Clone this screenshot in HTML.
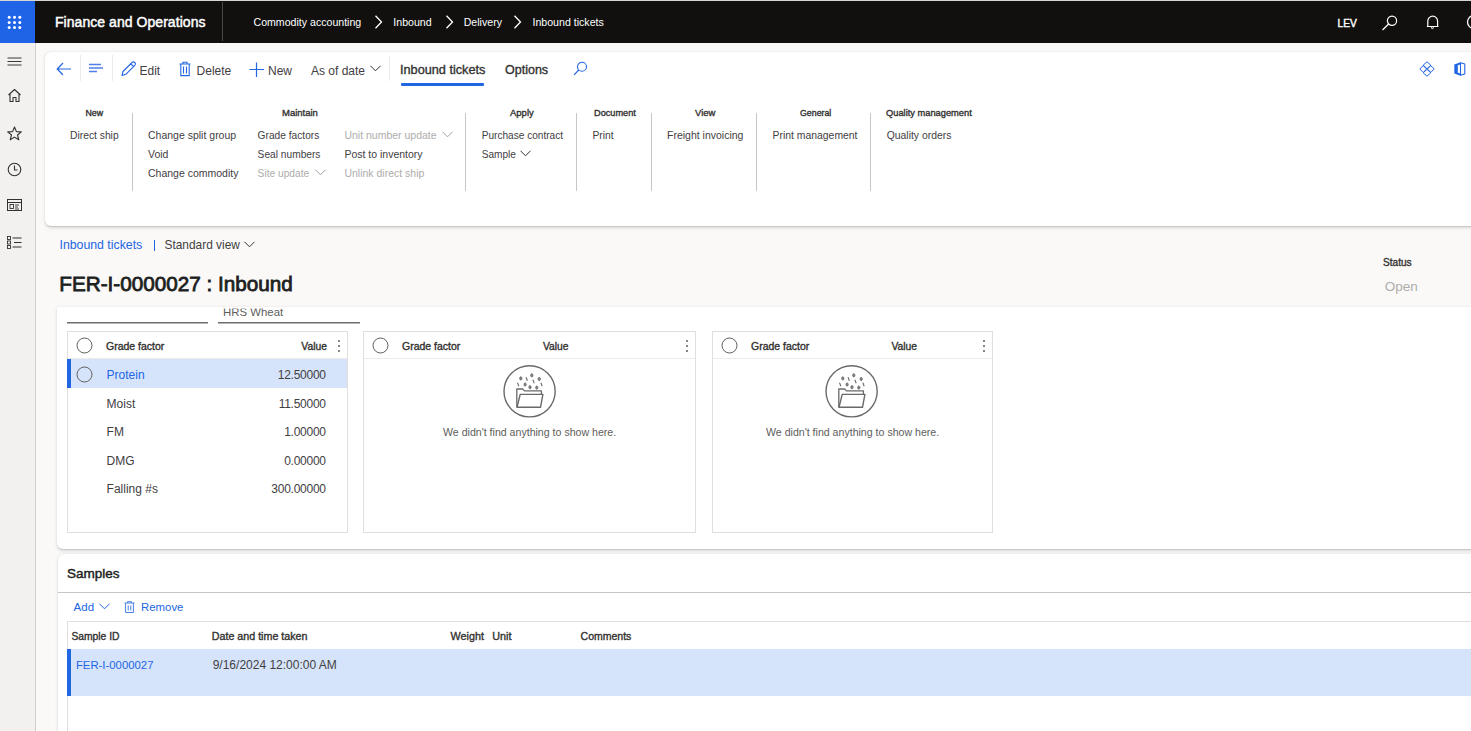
<!DOCTYPE html>
<html><head><meta charset="utf-8"><title>Inbound tickets</title>
<style>
html,body{margin:0;padding:0;width:1471px;height:731px;overflow:hidden;background:#faf9f8}
body{position:relative;font-family:"Liberation Sans", sans-serif}
.t{position:absolute;line-height:1;white-space:nowrap}
svg{overflow:visible}
</style></head><body>
<div style="position:absolute;left:0px;top:0px;width:1471px;height:731px;background:#faf9f8"></div>
<div style="position:absolute;left:0px;top:43px;width:35px;height:688px;background:#f2f1f0;border-right:1px solid #d2d0ce"></div>
<div style="position:absolute;left:0px;top:0px;width:1471px;height:43px;background:#11100f"></div>
<div style="position:absolute;left:0px;top:1px;width:35px;height:42px;background:#1f64e6"></div>
<div style="position:absolute;left:0px;top:0px;width:1471px;height:1px;background:#d8d6d4"></div>
<svg style="position:absolute;left:0px;top:0px" width="36" height="42" viewBox="0 0 36 42" fill="none"><circle cx="9.2" cy="17.2" r="1.5" fill="#fff"/><circle cx="9.2" cy="22.4" r="1.5" fill="#fff"/><circle cx="9.2" cy="27.6" r="1.5" fill="#fff"/><circle cx="14.5" cy="17.2" r="1.5" fill="#fff"/><circle cx="14.5" cy="22.4" r="1.5" fill="#fff"/><circle cx="14.5" cy="27.6" r="1.5" fill="#fff"/><circle cx="19.8" cy="17.2" r="1.5" fill="#fff"/><circle cx="19.8" cy="22.4" r="1.5" fill="#fff"/><circle cx="19.8" cy="27.6" r="1.5" fill="#fff"/></svg>
<div class="t" style="left:55.0px;top:15.2px;font-size:14px;color:#ffffff;font-weight:400;letter-spacing:0.05px;-webkit-text-stroke:0.45px #fff">Finance and Operations</div>
<div style="position:absolute;left:222px;top:2px;width:1px;height:39px;background:#4a4846"></div>
<div class="t" style="left:253.5px;top:17.4px;font-size:10.6px;color:#ffffff;font-weight:400;">Commodity accounting</div>
<div class="t" style="left:393.3px;top:17.4px;font-size:10.6px;color:#ffffff;font-weight:400;">Inbound</div>
<div class="t" style="left:463.7px;top:17.4px;font-size:10.6px;color:#ffffff;font-weight:400;">Delivery</div>
<div class="t" style="left:532.5px;top:17.4px;font-size:10.6px;color:#ffffff;font-weight:400;">Inbound tickets</div>
<svg style="position:absolute;left:374px;top:15px" width="9" height="14" viewBox="0 0 9 14" fill="none"><path d="M1.5 0.8 L7.5 7 L1.5 13.2" stroke="#fff" stroke-width="1.3"/></svg>
<svg style="position:absolute;left:445px;top:15px" width="9" height="14" viewBox="0 0 9 14" fill="none"><path d="M1.5 0.8 L7.5 7 L1.5 13.2" stroke="#fff" stroke-width="1.3"/></svg>
<svg style="position:absolute;left:513px;top:15px" width="9" height="14" viewBox="0 0 9 14" fill="none"><path d="M1.5 0.8 L7.5 7 L1.5 13.2" stroke="#fff" stroke-width="1.3"/></svg>
<div class="t" style="left:1337.6px;top:18.7px;font-size:10.2px;color:#ffffff;font-weight:400;-webkit-text-stroke:0.4px #fff">LEV</div>
<svg style="position:absolute;left:1381px;top:15px" width="17" height="16" viewBox="0 0 17 16" fill="none"><circle cx="11" cy="5.7" r="4.6" stroke="#fff" stroke-width="1.2"/><path d="M7.6 9 L1.5 15" stroke="#fff" stroke-width="1.3"/></svg>
<svg style="position:absolute;left:1425px;top:15px" width="15" height="16" viewBox="0 0 15 16" fill="none"><path d="M2.8 11.4 V6.1 A4.9 4.9 0 0 1 12.6 6.1 V11.4 M1.9 11.5 H13.5" stroke="#fff" stroke-width="1.2"/><circle cx="7.4" cy="12.7" r="1" stroke="#fff" stroke-width="0.9"/></svg>
<svg style="position:absolute;left:1464px;top:14px" width="7" height="16" viewBox="0 0 7 16" fill="none"><circle cx="10" cy="8" r="6.5" stroke="#fff" stroke-width="1.3"/></svg>
<svg style="position:absolute;left:7px;top:56px" width="15" height="11" viewBox="0 0 15 11" fill="none"><path d="M0.5 2h14M0.5 5.5h14M0.5 9h14" stroke="#3b3a39" stroke-width="1.1"/></svg>
<svg style="position:absolute;left:7px;top:88px" width="15" height="15" viewBox="0 0 15 15" fill="none"><path d="M1.5 7 L7.5 1.5 L13.5 7 M3 5.8 V13.5 H6 V9.5 H9 V13.5 H12 V5.8" stroke="#323130" stroke-width="1.1" stroke-linejoin="round"/></svg>
<svg style="position:absolute;left:7px;top:126px" width="15" height="15" viewBox="0 0 15 15" fill="none"><path d="M7.5 1 L9.4 5.6 L14.3 5.9 L10.5 9 L11.8 13.8 L7.5 11.1 L3.2 13.8 L4.5 9 L0.7 5.9 L5.6 5.6 Z" stroke="#323130" stroke-width="1.1" stroke-linejoin="round"/></svg>
<svg style="position:absolute;left:7px;top:162px" width="15" height="15" viewBox="0 0 15 15" fill="none"><circle cx="7.5" cy="7.5" r="6.3" stroke="#323130" stroke-width="1.1"/><path d="M7.5 3.5 V8 H10.5" stroke="#323130" stroke-width="1.1"/></svg>
<svg style="position:absolute;left:7px;top:199px" width="15" height="13" viewBox="0 0 15 13" fill="none"><rect x="0.5" y="0.5" width="14" height="11" stroke="#323130" stroke-width="1"/><path d="M0.5 3.5 H14.5" stroke="#323130"/><rect x="3" y="5.5" width="3.5" height="4" stroke="#323130" stroke-width="0.9"/><path d="M8 6 H12 M8 8 H11 M8 10 H12" stroke="#323130" stroke-width="0.9"/></svg>
<svg style="position:absolute;left:7px;top:236px" width="15" height="13" viewBox="0 0 15 13" fill="none"><rect x="0.5" y="0.5" width="3" height="3" stroke="#323130" stroke-width="0.9"/><rect x="0.5" y="5" width="3" height="3" stroke="#323130" stroke-width="0.9"/><rect x="0.5" y="9.5" width="3" height="3" stroke="#323130" stroke-width="0.9"/><path d="M5.5 2H14.5M7 6.5H14.5M5.5 11H14.5" stroke="#323130" stroke-width="1"/></svg>
<div style="position:absolute;left:45px;top:52px;width:1440px;height:174px;background:#fff;border-radius:6px;box-shadow:0 1.6px 3.6px rgba(0,0,0,0.13),0 0.3px 0.9px rgba(0,0,0,0.11)"></div>
<svg style="position:absolute;left:56px;top:62px" width="16" height="14" viewBox="0 0 16 14" fill="none"><path d="M7 1 L1.2 7 L7 13 M1.2 7 H15" stroke="#2266e3" stroke-width="1.2"/></svg>
<div style="position:absolute;left:80px;top:55px;width:1px;height:26px;background:#edebe9"></div>
<svg style="position:absolute;left:88px;top:63px" width="16" height="10" viewBox="0 0 16 10" fill="none"><path d="M1 1.5H13M1 5H15M1 8.5H9" stroke="#4f7fe8" stroke-width="1.3"/></svg>
<div style="position:absolute;left:112px;top:55px;width:1px;height:26px;background:#edebe9"></div>
<svg style="position:absolute;left:120px;top:61px" width="17" height="16" viewBox="0 0 17 16" fill="none"><path d="M2 14.5 L3 10.5 L12 1.5 A1.6 1.6 0 0 1 14.8 4.3 L5.8 13.3 Z M10.8 2.8 L13.5 5.5" stroke="#2266e3" stroke-width="1.1" stroke-linejoin="round"/></svg>
<div class="t" style="left:139.5px;top:64.6px;font-size:12px;color:#42403f;font-weight:400;">Edit</div>
<svg style="position:absolute;left:179px;top:61px" width="12" height="16" viewBox="0 0 12 16" fill="none"><path d="M0.5 3H11.5 M4 3V1.2H8V3 M1.8 3V14.6H10.2V3 M4.5 5.5V12.5 M7.5 5.5V12.5" stroke="#2266e3" stroke-width="1.1"/></svg>
<div class="t" style="left:196.6px;top:64.6px;font-size:12px;color:#42403f;font-weight:400;">Delete</div>
<svg style="position:absolute;left:249px;top:62px" width="16" height="16" viewBox="0 0 16 16" fill="none"><path d="M7.5 0.5V15M0.5 7.5H15" stroke="#2266e3" stroke-width="1.2"/></svg>
<div class="t" style="left:268.0px;top:64.6px;font-size:12px;color:#42403f;font-weight:400;">New</div>
<div class="t" style="left:311.0px;top:64.6px;font-size:12px;color:#42403f;font-weight:400;">As of date</div>
<svg style="position:absolute;left:370px;top:65px" width="11" height="7" viewBox="0 0 11 7" fill="none"><path d="M0.5 0.8 L5.5 5.8 L10.5 0.8" stroke="#323130" stroke-width="1"/></svg>
<div style="position:absolute;left:389px;top:56px;width:1px;height:25px;background:#edebe9"></div>
<div class="t" style="left:400.0px;top:63.8px;font-size:12.7px;color:#323130;font-weight:400;-webkit-text-stroke:0.35px currentColor">Inbound tickets</div>
<div style="position:absolute;left:401px;top:83px;width:83px;height:3px;background:#2266e3;border-radius:1px"></div>
<div class="t" style="left:505.0px;top:64.2px;font-size:12.5px;color:#323130;font-weight:400;-webkit-text-stroke:0.35px currentColor">Options</div>
<svg style="position:absolute;left:573px;top:61px" width="15" height="15" viewBox="0 0 15 15" fill="none"><circle cx="9" cy="5.8" r="4.5" stroke="#2266e3" stroke-width="1.1"/><path d="M5.8 9 L1 13.8" stroke="#2266e3" stroke-width="1.2"/></svg>
<svg style="position:absolute;left:1419px;top:61px" width="16" height="16" viewBox="0 0 16 16" fill="none"><path d="M4.2 4.2 L8 0.8 L11.8 4.2 L8 7.6 Z M0.8 8 L4.2 4.6 L7.6 8 L4.2 11.4 Z M8.4 8 L11.8 4.6 L15.2 8 L11.8 11.4 Z M4.2 11.8 L8 8.4 L11.8 11.8 L8 15.2 Z" stroke="#2266e3" stroke-width="1" stroke-linejoin="round"/></svg>
<svg style="position:absolute;left:1454px;top:62px" width="12" height="14" viewBox="0 0 12 14" fill="none"><path d="M0.3 2.6 L6.5 0.3 L7 0.5 V2.2 L3.8 3.2 V10.8 L7 11.8 V13.5 L6.5 13.7 L0.3 11.4 Z" fill="#2266e3"/><path d="M6.5 0.8 L10.8 2 V12 L6.5 13.2 Z" stroke="#2266e3" stroke-width="1.1" stroke-linejoin="round"/></svg>
<div class="t" style="left:85.5px;top:108.9px;font-size:8.8px;color:#323130;font-weight:400;-webkit-text-stroke:0.35px currentColor">New</div>
<div class="t" style="left:282.0px;top:108.3px;font-size:9.5px;color:#323130;font-weight:400;-webkit-text-stroke:0.35px currentColor">Maintain</div>
<div class="t" style="left:510.0px;top:108.3px;font-size:9.5px;color:#323130;font-weight:400;-webkit-text-stroke:0.35px currentColor">Apply</div>
<div class="t" style="left:594.0px;top:108.5px;font-size:9.2px;color:#323130;font-weight:400;-webkit-text-stroke:0.35px currentColor">Document</div>
<div class="t" style="left:695.0px;top:108.3px;font-size:9.5px;color:#323130;font-weight:400;-webkit-text-stroke:0.35px currentColor">View</div>
<div class="t" style="left:800.0px;top:108.9px;font-size:8.8px;color:#323130;font-weight:400;-webkit-text-stroke:0.35px currentColor">General</div>
<div class="t" style="left:886.0px;top:108.8px;font-size:9.3px;color:#323130;font-weight:400;-webkit-text-stroke:0.35px currentColor">Quality management</div>
<div style="position:absolute;left:132px;top:113px;width:1px;height:78px;background:#c8c6c4"></div>
<div style="position:absolute;left:465px;top:113px;width:1px;height:78px;background:#c8c6c4"></div>
<div style="position:absolute;left:576px;top:113px;width:1px;height:78px;background:#c8c6c4"></div>
<div style="position:absolute;left:651px;top:113px;width:1px;height:78px;background:#c8c6c4"></div>
<div style="position:absolute;left:756px;top:113px;width:1px;height:78px;background:#c8c6c4"></div>
<div style="position:absolute;left:870px;top:113px;width:1px;height:78px;background:#c8c6c4"></div>
<div class="t" style="left:70.0px;top:130.6px;font-size:10.3px;color:#42403f;font-weight:400;">Direct ship</div>
<div class="t" style="left:148.0px;top:130.4px;font-size:10.5px;color:#42403f;font-weight:400;">Change split group</div>
<div class="t" style="left:148.0px;top:149.4px;font-size:10.5px;color:#42403f;font-weight:400;">Void</div>
<div class="t" style="left:148.0px;top:168.4px;font-size:10.5px;color:#42403f;font-weight:400;">Change commodity</div>
<div class="t" style="left:257.6px;top:130.7px;font-size:10.2px;color:#42403f;font-weight:400;">Grade factors</div>
<div class="t" style="left:257.6px;top:149.7px;font-size:10.2px;color:#42403f;font-weight:400;">Seal numbers</div>
<div class="t" style="left:257.6px;top:168.7px;font-size:10.2px;color:#aeacaa;font-weight:400;">Site update</div>
<svg style="position:absolute;left:315px;top:169px" width="11" height="7" viewBox="0 0 11 7" fill="none"><path d="M0.5 0.8 L5.5 5.8 L10.5 0.8" stroke="#a19f9d" stroke-width="1"/></svg>
<div class="t" style="left:344.4px;top:130.4px;font-size:10.5px;color:#aeacaa;font-weight:400;">Unit number update</div>
<svg style="position:absolute;left:442px;top:131px" width="11" height="7" viewBox="0 0 11 7" fill="none"><path d="M0.5 0.8 L5.5 5.8 L10.5 0.8" stroke="#a19f9d" stroke-width="1"/></svg>
<div class="t" style="left:344.4px;top:149.4px;font-size:10.5px;color:#42403f;font-weight:400;">Post to inventory</div>
<div class="t" style="left:344.4px;top:168.4px;font-size:10.5px;color:#aeacaa;font-weight:400;">Unlink direct ship</div>
<div class="t" style="left:481.7px;top:130.8px;font-size:10.1px;color:#42403f;font-weight:400;">Purchase contract</div>
<div class="t" style="left:481.7px;top:149.8px;font-size:10.1px;color:#42403f;font-weight:400;">Sample</div>
<svg style="position:absolute;left:520px;top:150px" width="11" height="7" viewBox="0 0 11 7" fill="none"><path d="M0.5 0.8 L5.5 5.8 L10.5 0.8" stroke="#323130" stroke-width="1"/></svg>
<div class="t" style="left:592.4px;top:130.6px;font-size:10.3px;color:#42403f;font-weight:400;">Print</div>
<div class="t" style="left:667.0px;top:130.4px;font-size:10.5px;color:#42403f;font-weight:400;">Freight invoicing</div>
<div class="t" style="left:772.6px;top:130.5px;font-size:10.4px;color:#42403f;font-weight:400;">Print management</div>
<div class="t" style="left:886.7px;top:130.5px;font-size:10.4px;color:#42403f;font-weight:400;">Quality orders</div>
<div class="t" style="left:59.5px;top:239.2px;font-size:12.3px;color:#2266e3;font-weight:400;">Inbound tickets</div>
<div style="position:absolute;left:154px;top:240px;width:1px;height:11px;background:#2266e3"></div>
<div class="t" style="left:164.5px;top:239.5px;font-size:11.9px;color:#42403f;font-weight:400;">Standard view</div>
<svg style="position:absolute;left:244px;top:241px" width="11" height="7" viewBox="0 0 11 7" fill="none"><path d="M0.5 0.8 L5.5 5.8 L10.5 0.8" stroke="#323130" stroke-width="1"/></svg>
<div class="t" style="left:59.3px;top:273.8px;font-size:20.7px;color:#201f1e;font-weight:400;-webkit-text-stroke:0.8px currentColor">FER-I-0000027 : Inbound</div>
<div class="t" style="left:1383.0px;top:257.8px;font-size:10.1px;color:#323130;font-weight:400;-webkit-text-stroke:0.35px currentColor">Status</div>
<div class="t" style="left:1384.8px;top:279.9px;font-size:13.5px;color:#aeacaa;font-weight:400;">Open</div>
<div style="position:absolute;left:57px;top:307px;width:1420px;height:242px;background:#fff;border-radius:0 0 0 6px;box-shadow:0 1.6px 3.6px rgba(0,0,0,0.13),0 0.3px 0.9px rgba(0,0,0,0.11)"></div>
<div class="t" style="left:223.0px;top:306.6px;font-size:11.4px;color:#605e5c;font-weight:400;clip-path:inset(2px 0 0 0)">HRS Wheat</div>
<div style="position:absolute;left:67px;top:322px;width:141px;height:1px;background:#6f6d6b"></div>
<div style="position:absolute;left:67px;top:323px;width:141px;height:1px;background:#b8b6b4"></div>
<div style="position:absolute;left:218px;top:322px;width:142px;height:1px;background:#6f6d6b"></div>
<div style="position:absolute;left:218px;top:323px;width:142px;height:1px;background:#b8b6b4"></div>
<div style="position:absolute;left:67px;top:331px;width:281px;height:202px;border:1px solid #e1dfdd;box-sizing:border-box;background:#fff"></div>
<div style="position:absolute;left:68px;top:358px;width:279px;height:1px;background:#edebe9"></div>
<svg style="position:absolute;left:76px;top:337px" width="17" height="17" viewBox="0 0 17 17" fill="none"><circle cx="8.5" cy="8.5" r="7.5" stroke="#605e5c" stroke-width="1"/></svg>
<div class="t" style="left:106.0px;top:341.4px;font-size:10.5px;color:#323130;font-weight:400;-webkit-text-stroke:0.35px currentColor">Grade factor</div>
<div class="t" style="left:301.3px;top:341.6px;font-size:10.3px;color:#323130;font-weight:400;-webkit-text-stroke:0.35px currentColor">Value</div>
<svg style="position:absolute;left:337px;top:339px" width="4" height="14" viewBox="0 0 4 14" fill="none"><circle cx="2" cy="2" r="1" fill="#605e5c"/><circle cx="2" cy="7" r="1" fill="#605e5c"/><circle cx="2" cy="12" r="1" fill="#605e5c"/></svg>
<div style="position:absolute;left:68px;top:359px;width:279px;height:29px;background:#d6e4fb"></div>
<div style="position:absolute;left:67px;top:359px;width:4px;height:29px;background:#2266e3"></div>
<svg style="position:absolute;left:76px;top:366px" width="17" height="17" viewBox="0 0 17 17" fill="none"><circle cx="8.5" cy="8.5" r="7.5" stroke="#605e5c" stroke-width="1"/></svg>
<div class="t" style="left:106.6px;top:368.8px;font-size:12px;color:#2266e3;font-weight:400;">Protein</div>
<div class="t" style="left:200px;width:125.8px;text-align:right;top:368.8px;font-size:12px;letter-spacing:-0.25px;color:#42403f">12.50000</div>
<div class="t" style="left:106.6px;top:397.5px;font-size:12px;color:#42403f;font-weight:400;">Moist</div>
<div class="t" style="left:200px;width:125.8px;text-align:right;top:397.5px;font-size:12px;letter-spacing:-0.25px;color:#42403f">11.50000</div>
<div class="t" style="left:106.6px;top:426.1px;font-size:12px;color:#42403f;font-weight:400;">FM</div>
<div class="t" style="left:200px;width:125.8px;text-align:right;top:426.1px;font-size:12px;letter-spacing:-0.25px;color:#42403f">1.00000</div>
<div class="t" style="left:106.6px;top:454.8px;font-size:12px;color:#42403f;font-weight:400;">DMG</div>
<div class="t" style="left:200px;width:125.8px;text-align:right;top:454.8px;font-size:12px;letter-spacing:-0.25px;color:#42403f">0.00000</div>
<div class="t" style="left:106.6px;top:483.4px;font-size:12px;color:#42403f;font-weight:400;">Falling #s</div>
<div class="t" style="left:200px;width:125.8px;text-align:right;top:483.4px;font-size:12px;letter-spacing:-0.25px;color:#42403f">300.00000</div>
<div style="position:absolute;left:363px;top:331px;width:333px;height:202px;border:1px solid #e1dfdd;box-sizing:border-box;background:#fff"></div>
<div style="position:absolute;left:364px;top:358px;width:331px;height:1px;background:#edebe9"></div>
<svg style="position:absolute;left:372px;top:337px" width="17" height="17" viewBox="0 0 17 17" fill="none"><circle cx="8.5" cy="8.5" r="7.5" stroke="#605e5c" stroke-width="1"/></svg>
<div class="t" style="left:402.0px;top:341.4px;font-size:10.5px;color:#323130;font-weight:400;-webkit-text-stroke:0.35px currentColor">Grade factor</div>
<div class="t" style="left:543.0px;top:341.6px;font-size:10.3px;color:#323130;font-weight:400;-webkit-text-stroke:0.35px currentColor">Value</div>
<svg style="position:absolute;left:685px;top:339px" width="4" height="14" viewBox="0 0 4 14" fill="none"><circle cx="2" cy="2" r="1" fill="#605e5c"/><circle cx="2" cy="7" r="1" fill="#605e5c"/><circle cx="2" cy="12" r="1" fill="#605e5c"/></svg>
<svg style="position:absolute;left:502.9px;top:365px" width="53" height="53" viewBox="0 0 53 53" fill="none"><circle cx="26.6" cy="26.3" r="25.6" stroke="#6b6967" stroke-width="1.4"/><path d="M13.8 42.3 V24 H19.6 L21.5 25.9 H38.4 V29.4" stroke="#6b6967" stroke-width="1.3" stroke-linejoin="round"/><path d="M17.2 29.4 H39.9 L37.5 42.3 H14 Z" stroke="#6b6967" stroke-width="1.4" stroke-linejoin="round"/><ellipse cx="17.8" cy="13.4" rx="1.1" ry="1.6" fill="#8a8886" stroke="#6b6967" stroke-width="0.9"/><ellipse cx="28.8" cy="10.3" rx="1.1" ry="1.6" fill="#8a8886" stroke="#6b6967" stroke-width="0.9"/><ellipse cx="36.2" cy="14" rx="1.1" ry="1.6" fill="#8a8886" stroke="#6b6967" stroke-width="0.9"/><ellipse cx="22.1" cy="19.5" rx="1.1" ry="1.6" fill="#8a8886" stroke="#6b6967" stroke-width="0.9"/><ellipse cx="27" cy="22.2" rx="1.1" ry="1.6" fill="#8a8886" stroke="#6b6967" stroke-width="0.9"/><ellipse cx="33.8" cy="22.6" rx="1.1" ry="1.6" fill="#8a8886" stroke="#6b6967" stroke-width="0.9"/><path d="M23.099999999999998 12.3 L24.4 15.7" stroke="#6b6967" stroke-width="1.1"/><path d="M14.5 17.8 L15.8 21.2" stroke="#6b6967" stroke-width="1.1"/><path d="M29.9 14.8 L31.2 18.2" stroke="#6b6967" stroke-width="1.1"/><path d="M37.900000000000006 17.8 L39.2 21.2" stroke="#6b6967" stroke-width="1.1"/></svg>
<div class="t" style="left:443.0px;top:427.1px;font-size:10.6px;color:#605e5c;font-weight:400;">We didn't find anything to show here.</div>
<div style="position:absolute;left:712px;top:331px;width:281px;height:202px;border:1px solid #e1dfdd;box-sizing:border-box;background:#fff"></div>
<div style="position:absolute;left:713px;top:358px;width:279px;height:1px;background:#edebe9"></div>
<svg style="position:absolute;left:721px;top:337px" width="17" height="17" viewBox="0 0 17 17" fill="none"><circle cx="8.5" cy="8.5" r="7.5" stroke="#605e5c" stroke-width="1"/></svg>
<div class="t" style="left:751.0px;top:341.4px;font-size:10.5px;color:#323130;font-weight:400;-webkit-text-stroke:0.35px currentColor">Grade factor</div>
<div class="t" style="left:891.5px;top:341.6px;font-size:10.3px;color:#323130;font-weight:400;-webkit-text-stroke:0.35px currentColor">Value</div>
<svg style="position:absolute;left:982px;top:339px" width="4" height="14" viewBox="0 0 4 14" fill="none"><circle cx="2" cy="2" r="1" fill="#605e5c"/><circle cx="2" cy="7" r="1" fill="#605e5c"/><circle cx="2" cy="12" r="1" fill="#605e5c"/></svg>
<svg style="position:absolute;left:825.0px;top:365px" width="53" height="53" viewBox="0 0 53 53" fill="none"><circle cx="26.6" cy="26.3" r="25.6" stroke="#6b6967" stroke-width="1.4"/><path d="M13.8 42.3 V24 H19.6 L21.5 25.9 H38.4 V29.4" stroke="#6b6967" stroke-width="1.3" stroke-linejoin="round"/><path d="M17.2 29.4 H39.9 L37.5 42.3 H14 Z" stroke="#6b6967" stroke-width="1.4" stroke-linejoin="round"/><ellipse cx="17.8" cy="13.4" rx="1.1" ry="1.6" fill="#8a8886" stroke="#6b6967" stroke-width="0.9"/><ellipse cx="28.8" cy="10.3" rx="1.1" ry="1.6" fill="#8a8886" stroke="#6b6967" stroke-width="0.9"/><ellipse cx="36.2" cy="14" rx="1.1" ry="1.6" fill="#8a8886" stroke="#6b6967" stroke-width="0.9"/><ellipse cx="22.1" cy="19.5" rx="1.1" ry="1.6" fill="#8a8886" stroke="#6b6967" stroke-width="0.9"/><ellipse cx="27" cy="22.2" rx="1.1" ry="1.6" fill="#8a8886" stroke="#6b6967" stroke-width="0.9"/><ellipse cx="33.8" cy="22.6" rx="1.1" ry="1.6" fill="#8a8886" stroke="#6b6967" stroke-width="0.9"/><path d="M23.099999999999998 12.3 L24.4 15.7" stroke="#6b6967" stroke-width="1.1"/><path d="M14.5 17.8 L15.8 21.2" stroke="#6b6967" stroke-width="1.1"/><path d="M29.9 14.8 L31.2 18.2" stroke="#6b6967" stroke-width="1.1"/><path d="M37.900000000000006 17.8 L39.2 21.2" stroke="#6b6967" stroke-width="1.1"/></svg>
<div class="t" style="left:766.0px;top:427.1px;font-size:10.6px;color:#605e5c;font-weight:400;">We didn't find anything to show here.</div>
<div style="position:absolute;left:58px;top:554px;width:1420px;height:190px;background:#fff;border-radius:6px 0 0 0;box-shadow:0 1.6px 3.6px rgba(0,0,0,0.13),0 0.3px 0.9px rgba(0,0,0,0.11)"></div>
<div class="t" style="left:67.0px;top:566.9px;font-size:13.5px;color:#201f1e;font-weight:400;-webkit-text-stroke:0.45px currentColor">Samples</div>
<div style="position:absolute;left:58px;top:592px;width:1413px;height:1px;background:#c8c6c4"></div>
<div class="t" style="left:73.6px;top:601.6px;font-size:11.5px;color:#2266e3;font-weight:400;">Add</div>
<svg style="position:absolute;left:99px;top:603px" width="11" height="7" viewBox="0 0 11 7" fill="none"><path d="M0.5 0.8 L5.5 5.8 L10.5 0.8" stroke="#2266e3" stroke-width="1"/></svg>
<svg style="position:absolute;left:124px;top:601px" width="11" height="12" viewBox="0 0 11 12" fill="none"><path d="M0.5 2H10.5 M3.5 2V0.7H7.5V2 M1.6 2V11.5H9.4V2 M4.2 4.5V9.5 M6.8 4.5V9.5" stroke="#4a7fe8" stroke-width="1"/></svg>
<div class="t" style="left:141.0px;top:601.6px;font-size:11.4px;color:#2266e3;font-weight:400;">Remove</div>
<div style="position:absolute;left:67px;top:621px;width:1404px;height:1px;background:#e1dfdd"></div>
<div style="position:absolute;left:67px;top:621px;width:1px;height:110px;background:#e1dfdd"></div>
<div class="t" style="left:71.4px;top:631.7px;font-size:10.3px;color:#323130;font-weight:400;-webkit-text-stroke:0.35px currentColor">Sample ID</div>
<div class="t" style="left:211.8px;top:631.3px;font-size:10.7px;color:#323130;font-weight:400;-webkit-text-stroke:0.35px currentColor">Date and time taken</div>
<div class="t" style="left:450.5px;top:631.3px;font-size:10.8px;color:#323130;font-weight:400;-webkit-text-stroke:0.35px currentColor">Weight</div>
<div class="t" style="left:492.3px;top:631.3px;font-size:10.8px;color:#323130;font-weight:400;-webkit-text-stroke:0.35px currentColor">Unit</div>
<div class="t" style="left:580.6px;top:630.9px;font-size:10.5px;color:#323130;font-weight:400;-webkit-text-stroke:0.35px currentColor">Comments</div>
<div style="position:absolute;left:68px;top:649px;width:1403px;height:47px;background:#d6e4fb"></div>
<div style="position:absolute;left:67px;top:649px;width:4px;height:47px;background:#2266e3"></div>
<div class="t" style="left:75.9px;top:659.5px;font-size:11.35px;color:#2266e3;font-weight:400;">FER-I-0000027</div>
<div class="t" style="left:212.7px;top:658.9px;font-size:12px;color:#42403f;font-weight:400;">9/16/2024 12:00:00 AM</div>
</body></html>
